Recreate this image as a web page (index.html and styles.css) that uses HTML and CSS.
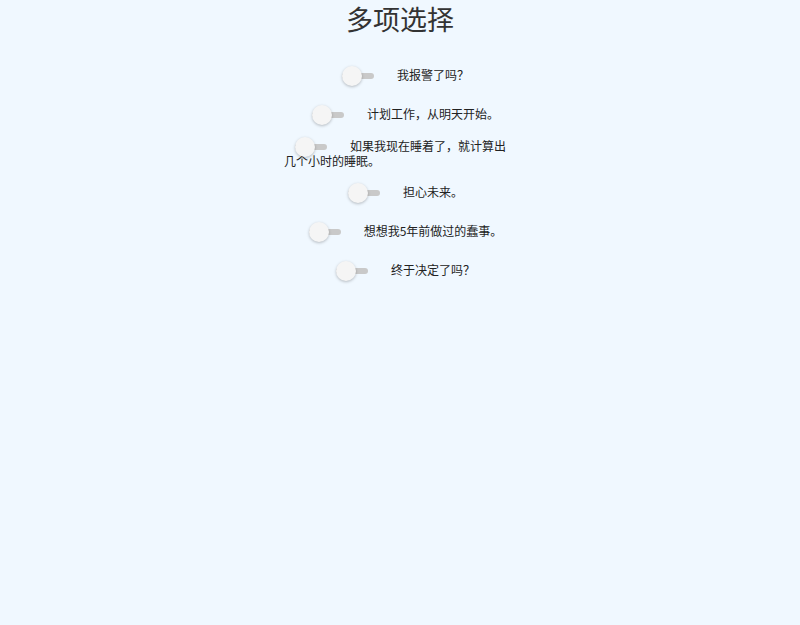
FILE: index.html
```html
<!DOCTYPE html>
<html lang="zh-CN">
<head>
<meta charset="utf-8">
<title>多项选择</title>
<link rel="stylesheet" href="styles.css">
</head>
<body>
  <h1 class="title">多项选择</h1>
  <ul class="choices">
    <li class="choice"><label class="choice-label"><span class="toggle"></span>我报警了吗？</label></li>
    <li class="choice"><label class="choice-label"><span class="toggle"></span>计划工作，从明天开始。</label></li>
    <li class="choice"><label class="choice-label"><span class="toggle"></span>如果我现在睡着了，就计算出几个小时的睡眠。</label></li>
    <li class="choice"><label class="choice-label"><span class="toggle"></span>担心未来。</label></li>
    <li class="choice"><label class="choice-label"><span class="toggle"></span>想想我5年前做过的蠢事。</label></li>
    <li class="choice"><label class="choice-label"><span class="toggle"></span>终于决定了吗？</label></li>
  </ul>
</body>
</html>
```
FILE: styles.css
```css
html, body {
  margin: 0;
  padding: 0;
  background: #f0f8ff;
  font-family: "Noto Sans CJK SC", "Noto Sans", sans-serif;
  color: #222;
}

.title {
  margin: 0;
  font-size: 27px;
  line-height: 38px;
  font-weight: normal;
  text-align: center;
  color: #333;
}

.choices {
  list-style: none;
  margin: 18px auto 0;
  padding: 0;
  width: 232px;
}

.choice {
  height: 39px;
  display: flex;
  align-items: center;
  justify-content: center;
}

.choice-label {
  font-size: 12px;
  line-height: 14px;
  text-align: left;
}

/* switch: short grey track with a round thumb resting on the left;
   the thumb overflows the line box so wrapped lines stay evenly spaced */
.toggle {
  display: inline-block;
  position: relative;
  width: 32px;
  height: 14px;
  margin: 0 23px 0 11px;
  vertical-align: middle;
}

.toggle::before {
  content: "";
  position: absolute;
  left: 0;
  top: 4px;
  width: 32px;
  height: 6px;
  border-radius: 3px;
  background: #c9c9c9;
}

.toggle::after {
  content: "";
  position: absolute;
  left: 0;
  top: -3px;
  width: 20px;
  height: 20px;
  border-radius: 50%;
  background: #f5f5f5;
  box-shadow: 0 1px 3px rgba(0, 0, 0, 0.25);
}
```
